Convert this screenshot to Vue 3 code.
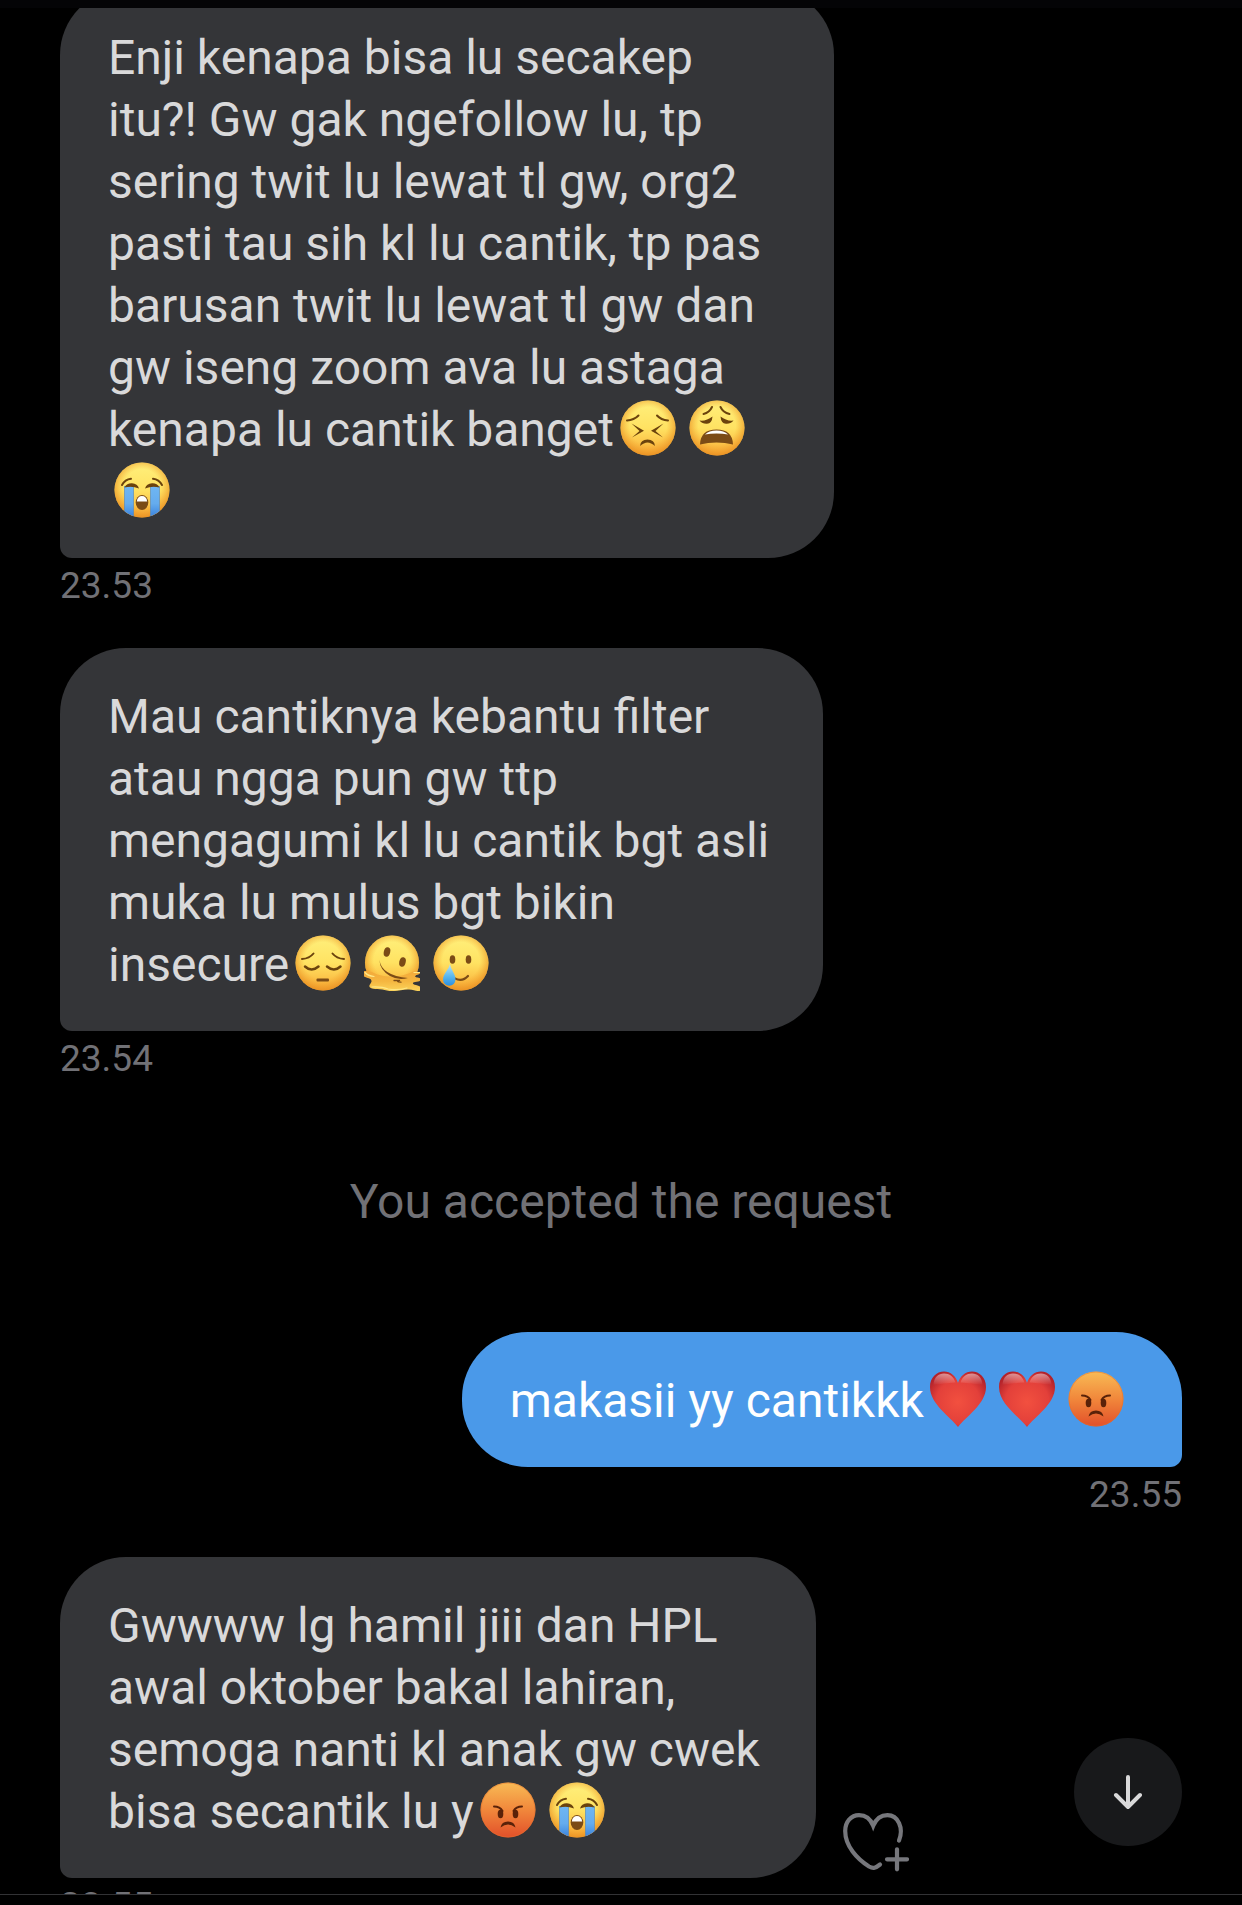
<template>
  <div class="chat">
    <svg class="sprite" width="0" height="0" aria-hidden="true">
      <defs>
        <linearGradient id="skin" x1="0" y1="0" x2="0" y2="1">
          <stop offset="0" stop-color="#fff07c" />
          <stop offset="0.5" stop-color="#ffe262" />
          <stop offset="1" stop-color="#f9ab35" />
        </linearGradient>
        <radialGradient id="rim" cx="0.5" cy="0.46" r="0.56">
          <stop offset="0.6" stop-color="#f3a02c" stop-opacity="0" />
          <stop offset="1" stop-color="#e58a1f" stop-opacity="0.85" />
        </radialGradient>
        <linearGradient id="rage" x1="0" y1="0" x2="0" y2="1">
          <stop offset="0" stop-color="#f8bb55" />
          <stop offset="0.5" stop-color="#f1873b" />
          <stop offset="1" stop-color="#e2502a" />
        </linearGradient>
        <linearGradient id="stream" x1="0" y1="0" x2="0" y2="1">
          <stop offset="0" stop-color="#6fb6f2" />
          <stop offset="0.5" stop-color="#65acee" />
          <stop offset="1" stop-color="#2f78d8" />
        </linearGradient>
        <linearGradient id="drop" x1="0" y1="0" x2="0" y2="1">
          <stop offset="0" stop-color="#b9e6fb" />
          <stop offset="0.55" stop-color="#5db9f0" />
          <stop offset="1" stop-color="#2b8fe0" />
        </linearGradient>
        <linearGradient id="puddle" x1="0" y1="0" x2="0" y2="1">
          <stop offset="0" stop-color="#f3a93a" />
          <stop offset="0.5" stop-color="#f5b640" />
          <stop offset="1" stop-color="#fbd35a" />
        </linearGradient>
        <radialGradient id="love" cx="0.5" cy="0.55" r="0.6">
          <stop offset="0" stop-color="#f2503f" />
          <stop offset="0.65" stop-color="#e3403a" />
          <stop offset="1" stop-color="#b3222a" />
        </radialGradient>
        <linearGradient id="shine" x1="0" y1="0" x2="0" y2="1">
          <stop offset="0" stop-color="#fff" stop-opacity="0.5" />
          <stop offset="1" stop-color="#fff" stop-opacity="0" />
        </linearGradient>
        <clipPath id="round"><circle cx="28" cy="28" r="27.5" /></clipPath>
      </defs>

      <symbol id="persevere" viewBox="0 0 56 56">
        <circle cx="28" cy="28" r="27.5" fill="url(#skin)" />
        <circle cx="28" cy="28" r="27.5" fill="url(#rim)" />
        <path fill="none" stroke="#6b430d" stroke-width="2" stroke-linecap="round" d="M7 20.5Q14 20 18.5 15.5M37 15.5Q41 20 48 20.5" />
        <path fill="#6b430d" d="M11.5 23.5L24 30.7L12 37.5L19.5 30.9ZM43.5 23.5L31 30.7L43 37.5L35.5 30.9Z" />
        <path fill="#6b430d" d="M20 46Q20.5 39.5 27.5 39.5T35 46Q31 42.5 27.5 42.5T20 46Z" />
      </symbol>

      <symbol id="weary" viewBox="0 0 56 56">
        <circle cx="28" cy="28" r="27.5" fill="url(#skin)" />
        <circle cx="28" cy="28" r="27.5" fill="url(#rim)" />
        <path fill="none" stroke="#6b430d" stroke-width="2" stroke-linecap="round" d="M14.5 14Q20.5 12.5 23 7M31.5 7Q34 12.5 40.5 14" />
        <path fill="#6b430d" d="M10.5 20.5Q17 21.5 23.5 16.5Q23 23.500 18 23.7Q13.5 24 10.5 20.5ZM44.5 20.5Q38 21.5 31.5 16.5Q32 23.5 37 23.7Q41.5 24 44.5 20.5Z" />
        <path fill="#7b4b16" d="M11 44.5Q11.5 29.5 27.5 29.5T44 44.5Q36 42.5 27.5 42.5T11 44.5Z" />
        <path fill="#fff" d="M16 34.5Q20 30.5 27.5 30.5T39 34.5Q34 33.5 27.5 33.5T16 34.5Z" />
      </symbol>

      <symbol id="sob" viewBox="0 0 56 56">
        <circle cx="28" cy="28" r="27.5" fill="url(#skin)" />
        <circle cx="28" cy="28" r="27.5" fill="url(#rim)" />
        <g clip-path="url(#round)" fill="url(#stream)" stroke="#4b86c4" stroke-width="0.6">
          <rect x="10.5" y="24.5" width="9" height="34" />
          <rect x="36.5" y="24.5" width="9" height="34" />
        </g>
        <path fill="none" stroke="#6b430d" stroke-width="2" stroke-linecap="round" d="M8 23Q11 17.5 17 16.8M39 16.8Q45 17.5 48 23" />
        <path fill="#6b430d" d="M10.5 25.5Q13 21 18 21.3Q23.5 21.5 25 26.5Q18 23.5 10.5 25.5ZM45.5 25.5Q43 21 38 21.3Q32.5 21.5 31 26.5Q38 23.5 45.5 25.5Z" />
        <ellipse cx="28" cy="40.5" rx="6.3" ry="7.6" fill="#7b4b16" />
        <path fill="#fff" d="M22.8 39.5Q23.5 34 28 34T33.2 39.5Z" />
      </symbol>

      <symbol id="pensive" viewBox="0 0 56 56">
        <circle cx="28" cy="28" r="27.5" fill="url(#skin)" />
        <circle cx="28" cy="28" r="27.5" fill="url(#rim)" />
        <g fill="none" stroke="#6b430d" stroke-width="2" stroke-linecap="round">
          <path d="M7 24Q14.5 23.5 18.5 18.5M37.5 18.5Q41.5 23.5 49 24" />
          <path d="M10 31.5Q16.5 37.5 23.5 31.5M32 31.5Q39 37.5 45.5 31.5" stroke-width="2.5" />
        </g>
        <rect x="21.5" y="43.5" width="12.5" height="3" rx="1" fill="#7b4b16" />
      </symbol>

      <symbol id="melting" viewBox="0 0 56 56" overflow="visible">
        <circle cx="28" cy="27.5" r="27" fill="url(#skin)" />
        <circle cx="28" cy="27.5" r="27" fill="url(#rim)" />
        <path fill="url(#puddle)" d="M1.5 36C-1.5 36-3 39 0 41.5C3 43.5 8 43 7.5 46.5C7 49 4 50.5 6 52.5C9 55 17 53.5 23 55.5C29 57.5 38 54 45 54.5C51 55 54 57 56.5 55.5C59 53.5 56.5 51 52 50C48 49 48 47.500 51 47C55 46.5 57 46 56.5 44C56 42 51 43 51 41C51 39.5 56 40 56 38L50 36C36 44 18 42 10 38C7 36.5 4 36 1.5 36Z" />
        <path fill="none" stroke="#ffe887" stroke-width="1.2" stroke-linecap="round" d="M1 37.5Q4 41 10 41.5M8 52Q18 51.5 24 54Q34 55.5 43 53M50 37.5H55.500" />
        <ellipse cx="23" cy="17" rx="3.2" ry="4.8" fill="#7b4b16" transform="rotate(14 23 17)" />
        <ellipse cx="38.5" cy="27" rx="3.2" ry="4.8" fill="#7b4b16" transform="rotate(14 38.5 27)" />
        <path fill="#7b4b16" d="M15.5 25Q17.5 40.5 44 43Q34 45.5 26 41Q15.5 34.5 15.5 25Z" />
        <path fill="none" stroke="#7b4b16" stroke-width="1.3" stroke-linecap="round" d="M30 45.5H36Q31 47 37 47.2" />
      </symbol>

      <symbol id="smiling-tear" viewBox="0 0 56 56">
        <circle cx="28" cy="28" r="27.5" fill="url(#skin)" />
        <circle cx="28" cy="28" r="27.5" fill="url(#rim)" />
        <ellipse cx="19.5" cy="24.5" rx="2.8" ry="4.3" fill="#7b4b16" />
        <ellipse cx="35.5" cy="24.5" rx="2.8" ry="4.3" fill="#7b4b16" />
        <path fill="none" stroke="#7b4b16" stroke-width="2.2" stroke-linecap="round" d="M22 43.5Q29.5 47 35 41" />
        <path fill="url(#drop)" d="M17 29C18 35 22.5 39 22.5 44.5A6.2 6.2 0 0 1 10 44.5C10 39 15.5 35 17 29Z" />
      </symbol>

      <symbol id="rage-face" viewBox="0 0 56 56">
        <circle cx="28" cy="28" r="27.5" fill="url(#rage)" />
        <circle cx="28" cy="28" r="27" fill="none" stroke="#e2702c" stroke-opacity="0.5" />
        <ellipse cx="20.5" cy="32" rx="2.8" ry="4.2" fill="#5a2209" />
        <ellipse cx="35.5" cy="32" rx="2.8" ry="4.2" fill="#5a2209" />
        <path fill="none" stroke="#5a2209" stroke-width="2" stroke-linecap="round" d="M14 24.5Q20 24.5 22.5 29M42 24.5Q36 24.5 33.5 29" />
        <path fill="#5a2209" d="M20.5 45.5Q21.5 39.5 28 39.5T35.5 45.5Q31.5 42.5 28 42.5T20.5 45.5Z" />
      </symbol>

      <symbol id="heart" viewBox="0 0 56 56">
        <path fill="url(#love)" d="M28 56C20 45.5 0 33 0 16C0 6.5 6.5 0.5 14 0.5C20.5 0.5 26 5 28 12C30 5 35.5 0.5 42 0.5C49.5 0.5 56 6.5 56 16C56 33 36 45.5 28 56Z" />
        <path fill="url(#shine)" d="M3.5 14C4 6 8.5 2.5 14 2.5C19.5 2.5 23.5 5.5 25.5 11.5Q14 12 3.5 14ZM52.5 14C52 6 47.5 2.5 42 2.5C36.5 2.5 32.5 5.5 30.5 11.5Q42 12 52.5 14Z" />
      </symbol>
    </svg>

    <header class="top-edge"></header>

    <main class="thread">
      <template v-for="item in items" :key="item.id">
        <p v-if="item.notice" class="notice">{{ item.notice }}</p>
        <article v-else class="message" :class="{ sent: item.sent }">
          <div class="message-row">
            <div class="bubble" :style="{ width: item.width + '%' }">
              <div v-for="(line, index) in item.lines" :key="index" class="line">
                {{ line.text }}<svg
                  v-for="(name, i) in line.emojis"
                  :key="i"
                  class="emoji"
                  role="img"
                  :aria-label="name"
                ><use :href="'#' + name" /></svg>
              </div>
            </div>
            <button v-if="item.canReact" class="react" type="button" aria-label="React">
              <svg width="66" height="60" viewBox="0 0 66 60" fill="none" stroke="currentColor" stroke-width="4.2" stroke-linecap="round">
                <path d="M56 27.5C61 15 55 2.2 44.5 2.2C38 2.2 33 6 30.2 12.8C27.5 6 22.5 2.2 16 2.2C8 2.2 2.2 9 2.2 18C2.2 33 14 46 26 53.5C30.5 56 32.5 55 37 51.5" />
                <path d="M54 36.3V56.3M44 46.3H64" />
              </svg>
            </button>
          </div>
          <time class="time">{{ item.time }}</time>
        </article>
      </template>
    </main>

    <button class="jump" type="button" aria-label="Scroll to latest">
      <svg width="30" height="36" viewBox="0 0 30 36" fill="none" stroke="currentColor" stroke-width="4" stroke-linecap="round" stroke-linejoin="round">
        <path d="M15 3V33M3 21L15 33L27 21" />
      </svg>
    </button>

    <footer class="bottom-edge"></footer>
  </div>
</template>

<script setup>
// Bubble widths are percentages of the thread column
const items = [
  {
    id: 1,
    width: 69,
    time: '23.53',
    lines: [
      { text: 'Enji kenapa bisa lu secakep' },
      { text: 'itu?! Gw gak ngefollow lu, tp' },
      { text: 'sering twit lu lewat tl gw, org2' },
      { text: 'pasti tau sih kl lu cantik, tp pas' },
      { text: 'barusan twit lu lewat tl gw dan' },
      { text: 'gw iseng zoom ava lu astaga' },
      { text: 'kenapa lu cantik banget', emojis: ['persevere', 'weary'] },
      { text: '', emojis: ['sob'] }
    ]
  },
  {
    id: 2,
    width: 68,
    time: '23.54',
    lines: [
      { text: 'Mau cantiknya kebantu filter' },
      { text: 'atau ngga pun gw ttp' },
      { text: 'mengagumi kl lu cantik bgt asli' },
      { text: 'muka lu mulus bgt bikin' },
      { text: 'insecure', emojis: ['pensive', 'melting', 'smiling-tear'] }
    ]
  },
  { id: 3, notice: 'You accepted the request' },
  {
    id: 4,
    width: 64.2,
    sent: true,
    time: '23.55',
    lines: [{ text: 'makasii yy cantikkk', emojis: ['heart', 'heart', 'rage-face'] }]
  },
  {
    id: 5,
    width: 67.4,
    time: '23.55',
    canReact: true,
    lines: [
      { text: 'Gwwww lg hamil jiii dan HPL' },
      { text: 'awal oktober bakal lahiran,' },
      { text: 'semoga nanti kl anak gw cwek' },
      { text: 'bisa secantik lu y', emojis: ['rage-face', 'sob'] }
    ]
  }
]
</script>

<style>
body {
  margin: 0;
  background: #000;
}
</style>

<style scoped>
.chat {
  position: relative;
  display: flex;
  flex-direction: column;
  height: 100vh;
  overflow: hidden;
  background: #000;
  color: #d9d9da;
  font-family: Roboto, "Liberation Sans", sans-serif;
  font-size: 48px;
  line-height: 62px;
}

.sprite {
  position: absolute;
}

.top-edge {
  flex: none;
  height: 8px;
  background: #040406;
  z-index: 1;
}

.thread {
  flex: 1;
  min-height: 0;
  padding: 0 60px;
  overflow: hidden;
}

.message {
  display: flex;
  flex-direction: column;
  align-items: flex-start;
  margin-bottom: 40px;
}

/* the oldest message is scrolled partly under the header */
.message:first-child {
  margin-top: -19px;
}

.message.sent {
  align-items: flex-end;
}

.message-row {
  display: flex;
  align-items: flex-end;
  width: 100%;
}

.sent .message-row {
  justify-content: flex-end;
}

.bubble {
  box-sizing: border-box;
  padding: 38px 0 35px 48px;
  border-radius: 66px 66px 66px 12px;
  background: #343538;
}

.sent .bubble {
  border-radius: 66px 66px 12px 66px;
  background: #4a99e9;
  color: #fff;
}

.line {
  height: 62px;
  white-space: nowrap;
}

.emoji {
  width: 56px;
  height: 56px;
  margin: 0 7px 0 6px;
  vertical-align: -10px;
}

.time {
  margin-top: 6px;
  color: #717176;
  font-size: 37px;
  line-height: 44px;
}

.notice {
  margin: 90px 0 99px;
  color: #717176;
  text-align: center;
}

.react {
  margin: 0 0 5px 27px;
  padding: 0;
  border: 0;
  background: none;
  color: #76777c;
}

.react svg,
.jump svg {
  display: block;
}

.jump {
  position: absolute;
  right: 60px;
  bottom: 59px;
  display: flex;
  align-items: center;
  justify-content: center;
  width: 108px;
  height: 108px;
  padding: 0;
  border: 0;
  border-radius: 50%;
  background: #18191b;
  color: #d9d9da;
}

.bottom-edge {
  flex: none;
  height: 10px;
  border-top: 1px solid #323235;
}
</style>
